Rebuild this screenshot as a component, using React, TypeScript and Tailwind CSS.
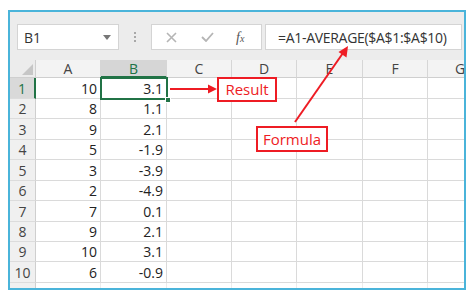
import React from 'react';

const COLS = ['A', 'B', 'C', 'D', 'E', 'F', 'G'];
const COL_W = [65, 66, 65, 65, 66, 65, 65];
const ROW_H = [21, 20, 21, 20, 21, 20, 21, 20, 20, 21];

const DATA: [number, string][] = [
  [10, '3.1'],
  [8, '1.1'],
  [9, '2.1'],
  [5, '-1.9'],
  [3, '-3.9'],
  [2, '-4.9'],
  [7, '0.1'],
  [9, '2.1'],
  [10, '3.1'],
  [6, '-0.9'],
];

const font = { fontFamily: '"Open Sans", "Noto Sans", sans-serif' };

function Toolbar() {
  return (
    <div className="h-[48px] bg-[#ececec] flex items-center pl-[7px] pt-[2px]">
      {/* Name box */}
      <div className="w-[102px] h-[26px] bg-white border border-[#d4d4d4] flex items-center justify-between pl-[6px] pr-[7px]">
        <span className="text-[14px] text-[#333]">B1</span>
        <svg width="8" height="5" viewBox="0 0 8 5">
          <path d="M0 0h8L4 5z" fill="#777" />
        </svg>
      </div>
      <div className="w-[32px] flex flex-col items-center gap-[2px]">
        <span className="w-[2px] h-[2px] bg-[#a8a8a8]" />
        <span className="w-[2px] h-[2px] bg-[#a8a8a8]" />
        <span className="w-[2px] h-[2px] bg-[#a8a8a8]" />
      </div>
      {/* Buttons */}
      <div className="w-[111px] h-[26px] bg-white border border-[#d4d4d4] flex items-center">
        <svg className="ml-[14px]" width="11" height="11" viewBox="0 0 11 11">
          <path d="M1 1l9 9M10 1l-9 9" stroke="#b5b5b5" strokeWidth="1.6" />
        </svg>
        <svg className="ml-[24px]" width="13" height="10" viewBox="0 0 13 10">
          <path d="M1 5l4 4 7-8" stroke="#b5b5b5" strokeWidth="1.8" fill="none" />
        </svg>
        <span className="ml-[22px] text-[14px] italic text-[#555]" style={{ fontFamily: '"Liberation Serif", serif' }}>
          f<span className="text-[10px]">x</span>
        </span>
      </div>
      {/* Formula box */}
      <div className="ml-[3px] w-[197px] h-[26px] bg-white border border-[#d4d4d4] flex items-center pl-[12px]">
        <span className="text-[14px] text-[#333] tracking-[-0.3px]">=A1-AVERAGE($A$1:$A$10)</span>
      </div>
    </div>
  );
}

function Grid() {
  return (
    <div className="flex flex-col">
      {/* Header row */}
      <div className="flex h-[18px]">
        <div className="w-[26px] shrink-0 bg-[#ececec] border-r border-[#cfcfcf] border-b border-b-[#cfcfcf] relative">
          <svg className="absolute right-[2px] bottom-[2px]" width="11" height="11" viewBox="0 0 11 11">
            <path d="M11 0v11H0z" fill="#c6c6c6" />
          </svg>
        </div>
        {COLS.map((c, i) => (
          <div
            key={c}
            style={{ width: COL_W[i] }}
            className={`shrink-0 flex items-center justify-center text-[14px] border-r border-[#d6d6d6] ${
              c === 'B'
                ? 'bg-[#d6d6d6] text-[#217346] border-b-2 border-b-[#217346]'
                : 'bg-[#f3f3f3] text-[#444] border-b border-b-[#cfcfcf]'
            }`}
          >
            {c}
          </div>
        ))}
      </div>
      {DATA.map(([a, b], r) => (
        <div key={r} className="flex" style={{ height: ROW_H[r] }}>
          <div
            className={`w-[26px] shrink-0 flex items-center justify-center text-[14px] border-r border-[#cfcfcf] border-b border-b-[#dcdcdc] ${
              r === 0 ? 'bg-[#d9d9d9] text-[#217346] border-r-2 border-r-[#217346]' : 'bg-[#f0f0f0] text-[#444]'
            }`}
          >
            {r + 1}
          </div>
          {COLS.map((c, i) => (
            <div
              key={c}
              style={{ width: COL_W[i] }}
              className="shrink-0 flex items-center justify-end pr-[3px] text-[14px] text-[#222] border-r border-b border-[#dadada] bg-white"
            >
              {i === 0 ? a : i === 1 ? b : ''}
            </div>
          ))}
        </div>
      ))}
      {/* partial row */}
      <div className="flex h-[6px]">
        <div className="w-[26px] shrink-0 bg-[#f0f0f0] border-r border-[#cfcfcf]" />
        {COLS.map((c, i) => (
          <div key={c} style={{ width: COL_W[i] }} className="shrink-0 border-r border-[#ececec] bg-white" />
        ))}
      </div>
    </div>
  );
}

export default function App() {
  return (
    <div className="w-[474px] h-[297px] bg-white pt-[10px] pl-[8px]" style={font}>
      <div className="w-[458px] h-[280px] border-2 border-[#4ab4da] relative overflow-hidden bg-white">
        <Toolbar />
        <Grid />

        {/* Selected cell B1 */}
        <div className="absolute left-[90px] top-[65px] w-[68px] h-[23px] border-2 border-[#217346]" />
        <div className="absolute left-[155px] top-[85px] w-[6px] h-[6px] bg-[#217346] border border-white" />

        {/* Arrows */}
        <svg className="absolute left-0 top-0" width="454" height="276" viewBox="0 0 454 276">
          <path d="M160 77H199" stroke="#ee1c24" strokeWidth="2" />
          <path d="M207 77l-9 -4.5v9z" fill="#ee1c24" />
          <path d="M285 110L333 41" stroke="#ee1c24" strokeWidth="2" />
          <path d="M338 34l-1.5 11.5l-8 -5.5z" fill="#ee1c24" />
        </svg>

        <div className="absolute left-[207px] top-[65px] w-[60px] h-[25px] border-2 border-[#ee1c24] bg-white flex items-center justify-center text-[15px] text-[#ee1c24]">
          Result
        </div>
        <div className="absolute left-[246px] top-[114px] w-[72px] h-[26px] border-2 border-[#ee1c24] bg-white flex items-center justify-center text-[15px] text-[#ee1c24]">
          Formula
        </div>
      </div>
    </div>
  );
}
